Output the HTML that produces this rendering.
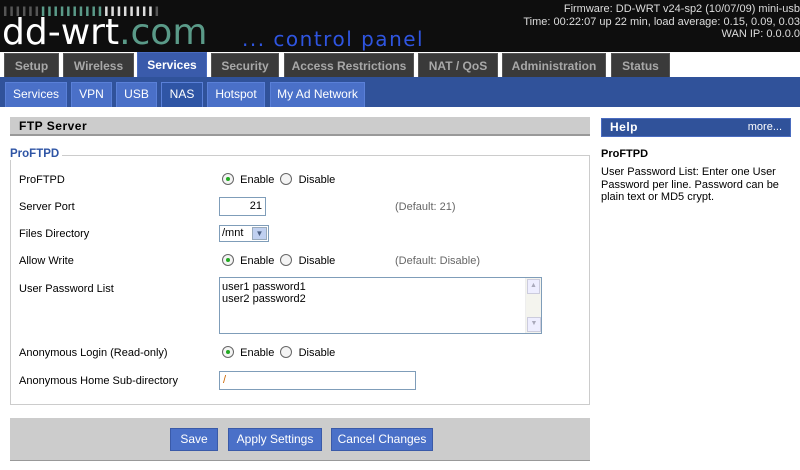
<!DOCTYPE html>
<html><head><style>
*{margin:0;padding:0;box-sizing:border-box}
body{width:800px;height:470px;overflow:hidden;background:#fff;font-family:"Liberation Sans",sans-serif;font-size:11px;color:#000;position:relative}
.a{position:absolute}
.hdr{left:0;top:0;width:800px;height:52px;background:#0e0e0e}
.tab{position:absolute;top:53px;height:24px;background:#3a3a3a;border:1px solid #555;border-bottom:none;color:#a8a8a8;font-weight:bold;font-size:12px;text-align:center;line-height:24px}
.tab.on{top:52px;height:26px;background:#3a5bab;border-color:#4a6cc0;color:#fff}
.sub{position:absolute;top:82px;height:25px;background:#4a70c8;border:1px solid #5a80d8;border-bottom:none;color:#fff;font-size:12px;text-align:center;line-height:23px}
.sub.on{background:#2f55a5;color:#fff}
.lbl{position:absolute;left:19px}
.rad{display:inline-block;width:12px;height:12px;border:1px solid #666;border-radius:50%;background:#f4f4f4;vertical-align:-2px;position:relative}
.rad.on::after{content:"";position:absolute;left:3px;top:3px;width:4px;height:4px;border-radius:50%;background:#2a2}
.inp{position:absolute;border:1px solid #7f9db9;background:#fff;height:19px}
.btn{position:absolute;top:428px;height:23px;background:#4a70c8;border:1px solid #3a5aa8;color:#fff;font-size:12px;text-align:center;line-height:21px}
</style></head><body>
<div class="a hdr"></div>
<div class="a" style="left:4px;top:7px;font-family:'DejaVu Sans Mono',monospace;font-size:8px;letter-spacing:1.5px;color:#888;white-space:nowrap">
<span style="color:#555">▌▌▌▌▌▌</span><span style="color:#5a9a88">▌▌▌▌▌▌▌▌▌▌</span><span style="color:#ddd">▌▌▌▌▌▌▌▌</span><span style="color:#555">▌</span></div>
<div class="a" style="left:2px;top:14px;font-size:36px;color:#fff;letter-spacing:0px;font-family:'DejaVu Sans',sans-serif;line-height:38px">dd-wrt<span style="color:#5a9a88">.com</span></div>
<div class="a" style="left:242px;top:27px;font-size:20px;color:#2f55e0;font-family:'DejaVu Sans',sans-serif;line-height:24px;letter-spacing:1.5px">... control panel</div>
<div class="a" style="right:0;top:3px;color:#ddd;font-size:11px;text-align:right;line-height:12.5px;white-space:nowrap">Firmware: DD-WRT v24-sp2 (10/07/09) mini-usb<br>Time: 00:22:07 up 22 min, load average: 0.15, 0.09, 0.03<br>WAN IP: 0.0.0.0</div>
<div class="tab" style="left:4px;width:55px">Setup</div>
<div class="tab" style="left:63px;width:71px">Wireless</div>
<div class="tab on" style="left:137px;width:70px">Services</div>
<div class="tab" style="left:211px;width:68px">Security</div>
<div class="tab" style="left:284px;width:130px">Access Restrictions</div>
<div class="tab" style="left:418px;width:80px">NAT / QoS</div>
<div class="tab" style="left:502px;width:104px">Administration</div>
<div class="tab" style="left:611px;width:59px">Status</div>
<div class="a" style="left:0;top:77px;width:800px;height:30px;background:#30529a"></div>
<div class="sub" style="left:5px;width:62px">Services</div>
<div class="sub" style="left:71px;width:41px">VPN</div>
<div class="sub" style="left:116px;width:41px">USB</div>
<div class="sub on" style="left:161px;width:42px">NAS</div>
<div class="sub" style="left:207px;width:58px">Hotspot</div>
<div class="sub" style="left:270px;width:95px">My Ad Network</div>

<div class="a" style="left:10px;top:117px;width:580px;height:19px;background:#ccc;border-bottom:2px solid #999;font-weight:bold;font-size:12px;padding-left:9px;line-height:18px;letter-spacing:.5px">FTP Server</div>
<div class="a" style="left:10px;top:155px;width:580px;height:250px;border:1px solid #ccc"></div>
<div class="a" style="left:10px;top:148px;background:#fff;color:#2f55a5;font-weight:bold;padding-right:3px;font-size:11.5px">ProFTPD</div>

<div class="lbl" style="top:174px">ProFTPD</div>
<div class="a" style="left:222px;top:173px"><span class="rad on"></span>&nbsp; Enable &nbsp;<span class="rad"></span>&nbsp; Disable</div>
<div class="lbl" style="top:201px">Server Port</div>
<div class="inp" style="left:219px;top:197px;width:47px;text-align:right;padding:2px 3px">21</div>
<div class="a" style="left:395px;top:201px;color:#666">(Default: 21)</div>
<div class="lbl" style="top:228px">Files Directory</div>
<div class="inp" style="left:219px;top:225px;width:50px;height:17px;padding:1px 2px">/mnt<span style="position:absolute;right:1px;top:1px;width:15px;height:13px;background:#c0d0f0;border:1px solid #9ab;font-size:8px;text-align:center;line-height:12px;color:#4d6185">▼</span></div>
<div class="lbl" style="top:255px">Allow Write</div>
<div class="a" style="left:222px;top:254px"><span class="rad on"></span>&nbsp; Enable &nbsp;<span class="rad"></span>&nbsp; Disable</div>
<div class="a" style="left:395px;top:255px;color:#666">(Default: Disable)</div>
<div class="lbl" style="top:283px">User Password List</div>
<div class="inp" style="left:219px;top:277px;width:323px;height:57px;padding:3px 2px;line-height:12px">user1 password1<br>user2 password2
<div style="position:absolute;right:0;top:0;width:16px;height:55px;background:#f4f4ee;border-left:1px solid #eee"><div style="margin:1px;height:15px;border:1px solid #ccd;background:#eef;font-size:7px;color:#aab;text-align:center">▲</div><div style="position:absolute;bottom:1px;left:1px;width:14px;height:15px;border:1px solid #ccd;background:#eef;font-size:7px;color:#aab;text-align:center">▼</div></div></div>
<div class="lbl" style="top:347px">Anonymous Login (Read-only)</div>
<div class="a" style="left:222px;top:346px"><span class="rad on"></span>&nbsp; Enable &nbsp;<span class="rad"></span>&nbsp; Disable</div>
<div class="lbl" style="top:375px">Anonymous Home Sub-directory</div>
<div class="inp" style="left:219px;top:371px;width:197px;padding:2px 3px;color:#c60">/</div>

<div class="a" style="left:10px;top:418px;width:580px;height:43px;background:#ccc;border-bottom:1px solid #999"></div>
<div class="btn" style="left:170px;width:48px">Save</div>
<div class="btn" style="left:228px;width:94px">Apply Settings</div>
<div class="btn" style="left:331px;width:102px">Cancel Changes</div>

<div class="a" style="left:601px;top:118px;width:190px;height:19px;background:#30529a;border:1px solid #4a6cc0;color:#fff;line-height:17px;padding:0 8px"><b style="font-size:12px;letter-spacing:.5px">Help</b><span style="float:right">more...</span></div>
<div class="a" style="left:601px;top:148px;font-weight:bold">ProFTPD</div>
<div class="a" style="left:601px;top:166px;width:190px;line-height:12.5px">User Password List: Enter one User Password per line. Password can be plain text or MD5 crypt.</div>
</body></html>
